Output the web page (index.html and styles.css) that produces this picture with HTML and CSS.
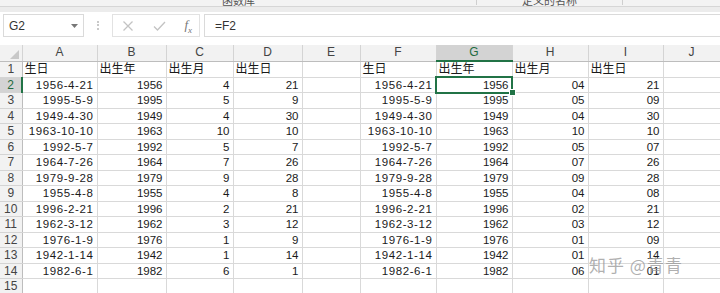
FILE: index.html
```html
<!DOCTYPE html>
<html lang="zh">
  <head>
    <meta charset="UTF-8" />
    <title>出生日期拆分</title>
    <link rel="stylesheet" href="styles.css">
  </head>
  <body>
    <div class="sheet-app">
      <div class="ribbon-tail">
        <span class="group-label g1">函数库</span>
        <span class="sep s1"></span>
        <span class="group-label g2">定义的名称</span>
        <span class="sep s2"></span>
      </div>
      <div class="formula-bar">
        <div class="name-box">
          <span>G2</span>
          <svg class="drop" width="7" height="4" viewBox="0 0 7 4"><path d="M0 0h7L3.5 4z" fill="#777"/></svg>
        </div>
        <div class="grip"></div>
        <div class="fx-tools">
          <svg width="12" height="12" viewBox="0 0 12 12"><path d="M1.5 1.5l9 9M10.5 1.5l-9 9" stroke="#c3c3c3" stroke-width="1.3" fill="none"/></svg>
          <svg width="13" height="12" viewBox="0 0 13 12"><path d="M1 6.5l3.5 3.5L12 2" stroke="#c3c3c3" stroke-width="1.3" fill="none"/></svg>
          <span class="fx">f<sub>x</sub></span>
        </div>
        <div class="formula-input">=F2</div>
      </div>
      <div class="gap-strip"></div>
      <table class="grid">
        <colgroup>
          <col style="width:22px"><col style="width:75px"><col style="width:69px"><col style="width:67px"><col style="width:69px"><col style="width:58px"><col style="width:76px"><col style="width:76px"><col style="width:76px"><col style="width:75px"><col style="width:57px">
        </colgroup>
        <thead>
          <tr>
            <th class="corner"><span class="tri"></span></th>
            <th>A</th><th>B</th><th>C</th><th>D</th><th>E</th><th>F</th><th class="active">G</th><th>H</th><th>I</th><th>J</th>
          </tr>
        </thead>
        <tbody id="rows"></tbody>
      </table>
      <div class="watermark">知乎 @青青</div>
    </div>
    <script>
      const data = [
        ["1956-4-21", 1956, "04", "21"],
        ["1995-5-9", 1995, "05", "09"],
        ["1949-4-30", 1949, "04", "30"],
        ["1963-10-10", 1963, "10", "10"],
        ["1992-5-7", 1992, "05", "07"],
        ["1964-7-26", 1964, "07", "26"],
        ["1979-9-28", 1979, "09", "28"],
        ["1955-4-8", 1955, "04", "08"],
        ["1996-2-21", 1996, "02", "21"],
        ["1962-3-12", 1962, "03", "12"],
        ["1976-1-9", 1976, "01", "09"],
        ["1942-1-14", 1942, "01", "14"],
        ["1982-6-1", 1982, "06", "01"]
      ];

      const tbody = document.getElementById("rows");
      let html = '<tr><td class="rh">1</td><td class="txt">生日</td><td class="txt">出生年</td><td class="txt">出生月</td><td class="txt">出生日</td><td></td>' +
        '<td class="txt">生日</td><td class="txt">出生年</td><td class="txt">出生月</td><td class="txt">出生日</td><td></td></tr>';

      data.forEach((row, i) => {
        const n = i + 2;
        const [date, year, month, day] = row;
        html += `<tr><td class="rh${n === 2 ? " active" : ""}">${n}</td>` +
          `<td class="date">${date}</td><td>${year}</td><td>${parseInt(month, 10)}</td><td>${parseInt(day, 10)}</td><td class="txt"></td>` +
          `<td class="date">${date}</td><td${n === 2 ? ' class="selected"' : ""}>${year}${n === 2 ? '<span class="handle"></span>' : ""}</td><td>${month}</td><td>${day}</td><td class="txt"></td></tr>`;
      });

      html += '<tr><td class="rh">15</td><td></td><td></td><td></td><td></td><td></td><td></td><td></td><td></td><td></td><td></td></tr>';
      tbody.innerHTML = html;
    </script>
  </body>
</html>
```

FILE: styles.css
```css
body {
  margin: 0;
  padding: 0;
  background: #fff;
  font-family: "Liberation Sans", "Noto Sans CJK SC", sans-serif;
  color: #222;
  overflow: hidden;
}
.sheet-app {
  position: relative;
  width: 720px;
  height: 293px;
  overflow: hidden;
  background: #fff;
}
.ribbon-tail {
  position: relative;
  height: 6px;
  background: #f3f3f3;
  border-bottom: 1px solid #d6d6d6;
  overflow: hidden;
}
.group-label {
  position: absolute;
  top: -8px;
  font-size: 11px;
  color: #555;
}
.g1 {
  left: 222px;
}
.g2 {
  left: 522px;
}
.sep {
  position: absolute;
  top: 0;
  width: 1px;
  height: 5px;
  background: #cfcfcf;
}
.s1 {
  left: 476px;
}
.s2 {
  left: 622px;
}
.formula-bar {
  display: flex;
  align-items: flex-start;
  height: 25px;
  padding: 2px 0 0 3px;
  background: #fff;
  border-top: 5px solid #ececec;
}
.name-box {
  display: flex;
  align-items: center;
  justify-content: space-between;
  box-sizing: border-box;
  width: 81px;
  height: 23px;
  padding: 0 5px 0 5px;
  border: 1px solid #dadada;
  font-size: 12px;
  color: #333;
}
.grip {
  width: 1px;
  height: 9px;
  margin: 7px 12px 0 13px;
  border-left: 2px dotted #c9c9c9;
}
.fx-tools {
  display: flex;
  align-items: center;
  justify-content: space-between;
  box-sizing: border-box;
  width: 88px;
  height: 23px;
  padding: 0 7px 0 9px;
  border: 1px solid #e2e2e2;
}
.fx {
  font-family: "Liberation Serif", serif;
  font-style: italic;
  font-size: 13px;
  color: #777;
}
.fx sub {
  font-size: 9px;
}
.formula-input {
  flex: 1;
  box-sizing: border-box;
  height: 23px;
  margin-left: 4px;
  padding: 4px 10px;
  border: 1px solid #dadada;
  border-right: none;
  font-size: 12px;
  color: #333;
}
.gap-strip {
  height: 6px;
  background: #fff;
}
.grid {
  border-collapse: collapse;
  table-layout: fixed;
  width: 720px;
  font-size: 11.5px;
}
.grid th {
  height: 15px;
  padding: 0;
  background: #f2f2f2;
  border-right: 1px solid #d4d4d4;
  border-bottom: 1px solid #bdbdbd;
  font-weight: normal;
  font-size: 12px;
  color: #444;
  text-align: center;
  line-height: 15px;
}
.grid th.active {
  background: #d3d3d3;
  color: #1e6b40;
  border-bottom: 2px solid #217346;
}
.corner {
  position: relative;
}
.tri {
  position: absolute;
  right: 3px;
  bottom: 2px;
  width: 0;
  height: 0;
  border-left: 9px solid transparent;
  border-bottom: 9px solid #c8c8c8;
}
.grid td {
  height: 14.5px;
  padding: 0 3px 0 2px;
  border-right: 1px solid #d9d9d9;
  border-bottom: 1px solid #d9d9d9;
  text-align: right;
  line-height: 14px;
  white-space: nowrap;
  overflow: visible;
  color: #1a1a1a;
}
.grid td.txt {
  text-align: left;
  font-size: 12px;
}
.grid td.date {
  letter-spacing: 0.6px;
}
.grid td.rh {
  padding: 0;
  background: #f2f2f2;
  border-right: 1px solid #bdbdbd;
  border-bottom: 1px solid #d4d4d4;
  text-align: center;
  font-size: 12px;
  color: #444;
}
.grid td.rh.active {
  background: #d3d3d3;
  color: #1e6b40;
  border-right: 2px solid #217346;
}
.grid td.selected {
  position: relative;
  outline: 2px solid #217346;
  outline-offset: -1px;
}
.handle {
  position: absolute;
  right: -4px;
  bottom: -4px;
  width: 5px;
  height: 5px;
  background: #217346;
  border: 1px solid #fff;
}
.watermark {
  position: absolute;
  left: 589px;
  top: 252px;
  font-family: "Noto Sans CJK SC", sans-serif;
  font-size: 17px;
  color: rgba(150, 150, 150, 0.75);
  letter-spacing: 1px;
}
```
